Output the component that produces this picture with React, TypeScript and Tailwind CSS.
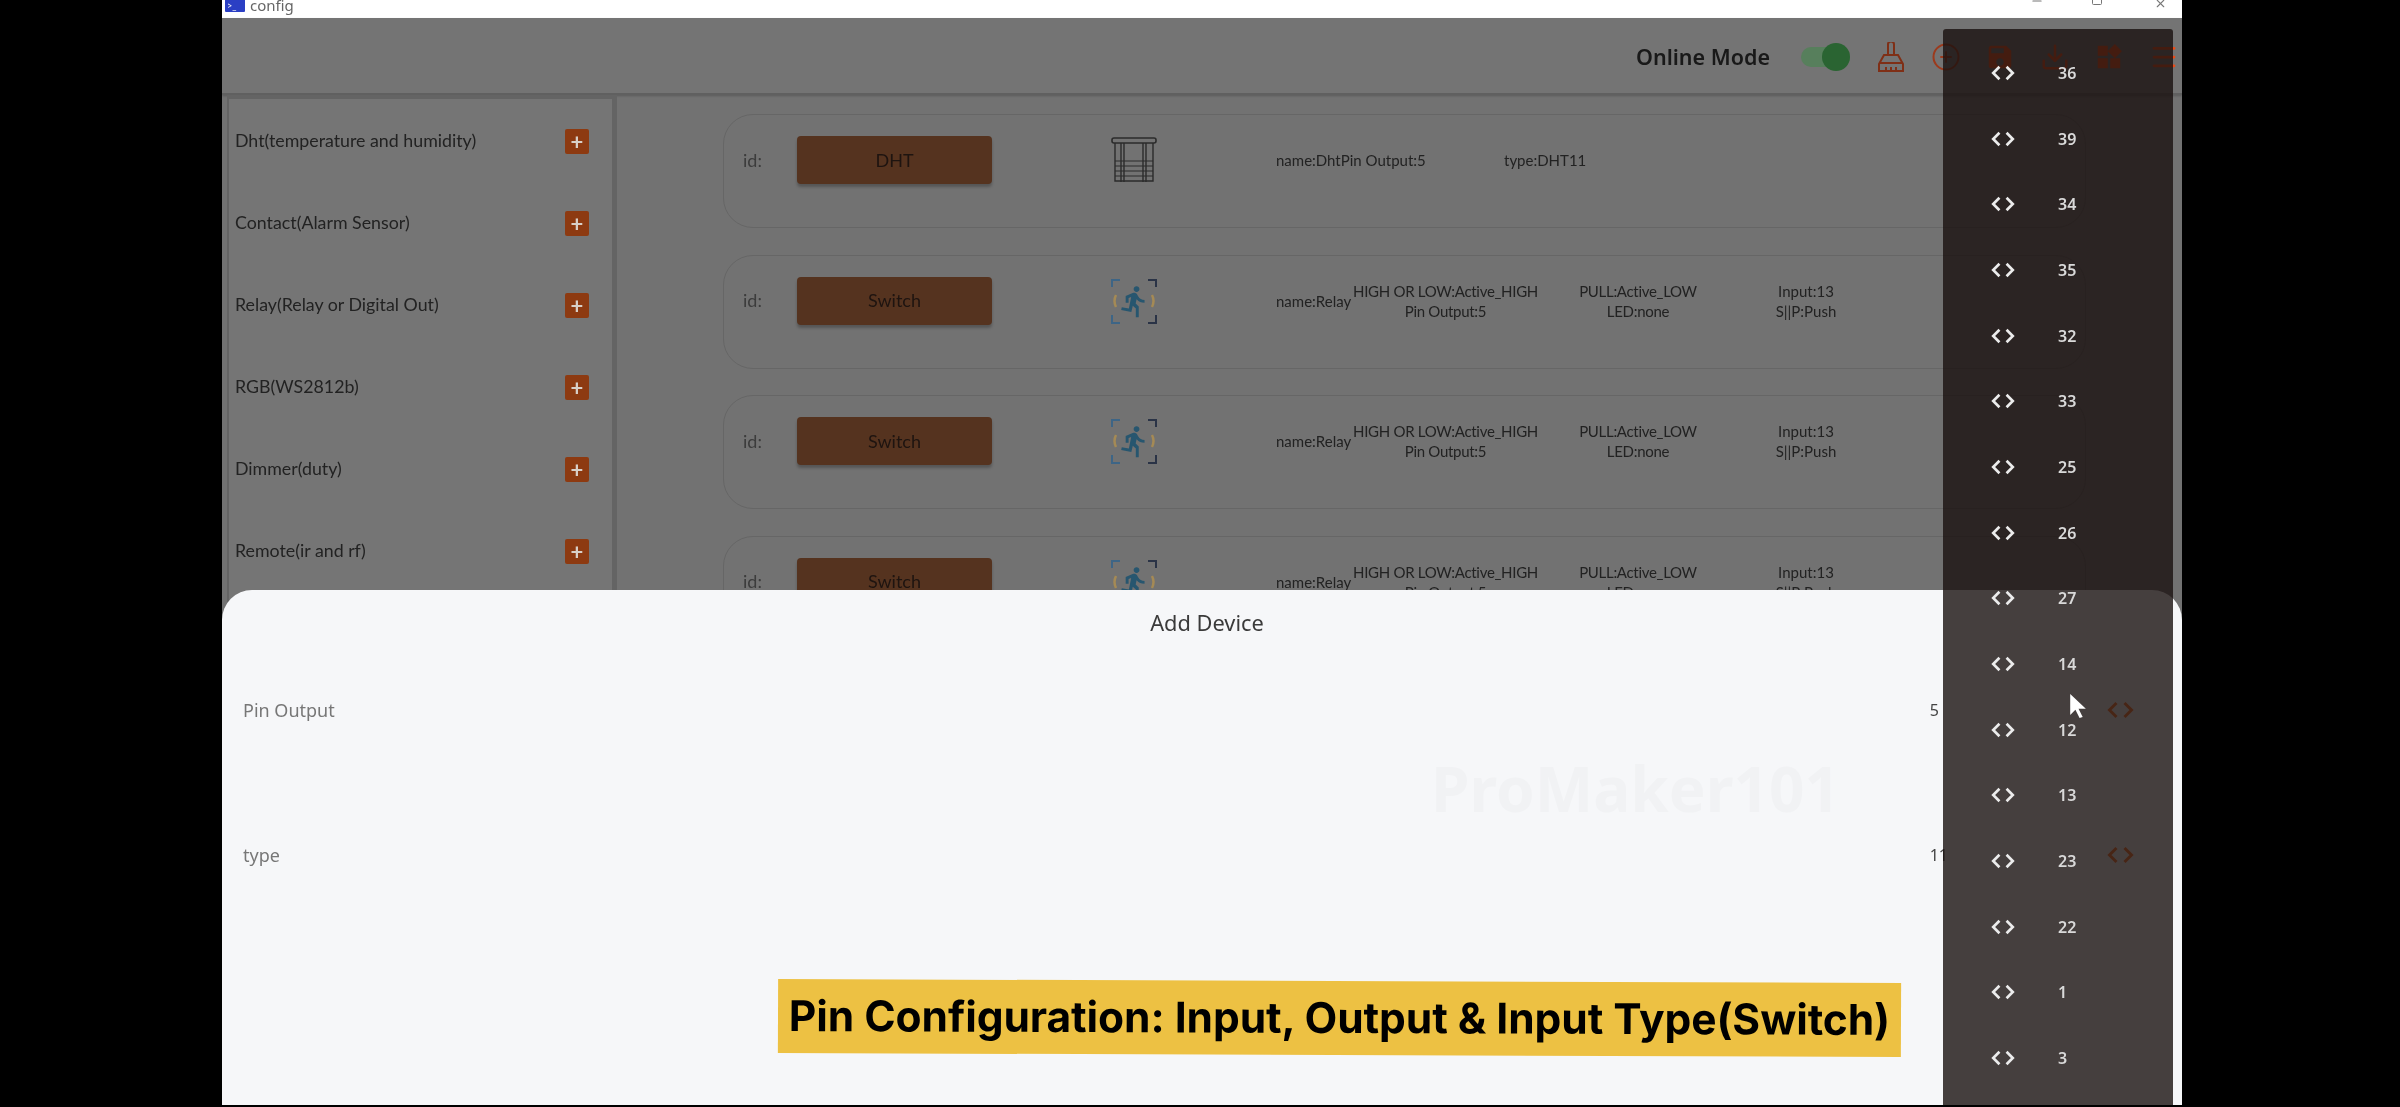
import { CirclePlus, Download, Menu, Minus, Square, X } from 'lucide-react'
import { MdSave, MdWidgets } from 'react-icons/md'

const sensors = [
  'Dht(temperature and humidity)',
  'Contact(Alarm Sensor)',
  'Relay(Relay or Digital Out)',
  'RGB(WS2812b)',
  'Dimmer(duty)',
  'Remote(ir and rf)',
]

const pins = ['36', '39', '34', '35', '32', '33', '25', '26', '27', '14', '12', '13', '23', '22', '1', '3']

function Chevrons({ className }: { className?: string }) {
  return (
    <svg viewBox="0 0 28 18" className={className} fill="none" stroke="currentColor" strokeWidth="3">
      <path d="M10 2 3 9l7 7" />
      <path d="M18 2l7 7-7 7" />
    </svg>
  )
}

function Broom() {
  return (
    <svg viewBox="0 0 26 30" className="h-[30px] w-[26px] text-[#7f2f16]" fill="none" stroke="currentColor" strokeWidth="2">
      <path d="M10 13V2.5a3 3 0 0 1 6 0V13" />
      <path d="M6 13h14l5 9v7H1v-7z" />
      <path d="M1.5 21h23M8 29v-4M13 29v-4M18 29v-4" />
    </svg>
  )
}

function BlindIcon() {
  return (
    <svg viewBox="0 0 46 46" className="h-[46px] w-[46px] text-[#2b2b2b]" fill="none" stroke="currentColor">
      <rect x="1" y="1" width="44" height="5" rx="2" strokeWidth="1.6" />
      <path d="M4 6v38h38V6" strokeWidth="1.4" />
      <path d="M4 24h38M4 29h38M4 34h38M4 39h38" strokeWidth="1" />
      <path d="M10 6v39M13 6v39M32 6v39M35 6v39" strokeWidth="1.4" />
    </svg>
  )
}

function RunnerIcon() {
  return (
    <svg viewBox="0 0 46 46" className="h-[46px] w-[46px]" fill="none">
      <path d="M1 9V2h8" stroke="#3d6586" strokeWidth="2" />
      <path d="M37 2h8v7" stroke="#2a3346" strokeWidth="2" />
      <path d="M1 37v8h8" stroke="#3d6586" strokeWidth="2" />
      <path d="M37 45h8v-8" stroke="#2a3346" strokeWidth="2" />
      <path d="M5 17q-3 6 0 12M41 17q3 6 0 12" stroke="#a58a55" strokeWidth="2.5" />
      <g transform="translate(6 6) scale(1.45)">
        <path
          fill="#27566f"
          d="M13.49 5.48c1.1 0 2-.9 2-2s-.9-2-2-2-2 .9-2 2 .9 2 2 2zm-3.6 13.9l1-4.4 2.1 2v6h2v-7.5l-2.1-2 .6-3c1.3 1.5 3.3 2.5 5.5 2.5v-2c-1.9 0-3.5-1-4.3-2.4l-1-1.6c-.4-.6-1-1-1.7-1-.3 0-.5.1-.8.1l-5.2 2.2v4.7h2v-3.4l1.8-.7-1.6 8.1-4.9-1-.4 2 7 1.4z"
        />
      </g>
    </svg>
  )
}

function DeviceCard({ label, kind }: { label: string; kind: 'dht' | 'switch' }) {
  return (
    <div className="h-[114px] w-[1363px] shrink-0 rounded-[30px] border border-[#666666] pt-[21px]">
      <div className="flex h-[48px] items-center">
        <span className="ml-[19px] w-[54px] text-[18px] text-[#3c3c3c]">id:</span>
        <div className="flex h-[48px] w-[195px] items-center justify-center rounded-[4px] bg-[#55331f] text-[18px] text-[#1e1410] shadow-[0_3px_3px_rgba(0,0,0,0.25)]">
          {label}
        </div>
        <div className="ml-[119px] w-[165px]">{kind === 'dht' ? <BlindIcon /> : <RunnerIcon />}</div>
        {kind === 'dht' ? (
          <div className="flex text-[15px] text-[#222222]">
            <span className="w-[228px]">name:DhtPin Output:5</span>
            <span>type:DHT11</span>
          </div>
        ) : (
          <div className="flex items-center text-[15px] leading-[20px] text-[#222222]">
            <span className="w-[76px] whitespace-nowrap">name:Relay</span>
            <span className="w-[187px] text-center tracking-[-0.3px] whitespace-nowrap">
              HIGH OR LOW:Active_HIGH
              <br />
              Pin Output:5
            </span>
            <span className="ml-[40px] w-[118px] text-center tracking-[-0.3px] whitespace-nowrap">
              PULL:Active_LOW
              <br />
              LED:none
            </span>
            <span className="ml-[50px] w-[118px] text-center">
              Input:13
              <br />
              S||P:Push
            </span>
          </div>
        )}
      </div>
    </div>
  )
}

export default function App() {
  return (
    <div className="flex h-[1107px] w-[2400px] overflow-hidden bg-black pl-[222px] font-['Lato',sans-serif]">
      <div className="relative h-[1105px] w-[1960px] overflow-hidden bg-[#727272] blur-[0.4px]">
        <div className="flex h-[18px] items-start justify-between overflow-hidden bg-white pl-[3px]">
          <div className="flex items-start gap-[5px]">
            <div className="flex h-[12px] w-[20px] items-end rounded-b-[1px] bg-[#2b3fc4] px-[2px] pb-[1px] text-[9px] leading-[10px] text-white">
              &gt;_
            </div>
            <span className="-mt-[5px] font-['Noto_Sans',sans-serif] text-[15px] leading-[20px] text-[#666666]">config</span>
          </div>
          <div className="flex items-start text-[#777777]">
            <Minus className="-mt-[6px] mr-[47px] h-[14px] w-[14px]" />
            <Square className="-mt-[6px] mr-[51px] h-[12px] w-[12px]" />
            <X className="-mt-[3px] mr-[15px] h-[13px] w-[13px]" />
          </div>
        </div>

        <header className="flex h-[77px] items-center border-b-2 border-[#606060] bg-[#747474] pt-[2px] shadow-[0_1px_2px_rgba(0,0,0,0.2)]">
          <span className="ml-[1414px] w-[132px] shrink-0 font-['Noto_Sans',sans-serif] text-[21.5px] leading-none font-semibold whitespace-nowrap text-[#191919]">
            Online Mode
          </span>
          <div className="relative ml-[33px] h-[20px] w-[49px] shrink-0 rounded-full bg-[#577f5c]">
            <div className="absolute -top-[4px] right-0 h-[28px] w-[28px] rounded-full bg-[#2a6432]" />
          </div>
          <div className="ml-[26px] flex shrink-0 items-center gap-[24.5px]">
            <span className="flex w-[30px] justify-center">
              <Broom />
            </span>
            <CirclePlus strokeWidth={1.6} className="h-[30px] w-[30px] text-[#9c3a1c]" />
            <MdSave className="h-[30px] w-[30px] text-[#f04a14]" />
            <Download strokeWidth={2} className="h-[30px] w-[30px] text-[#f04a14]" />
            <MdWidgets className="h-[30px] w-[30px] text-[#f04a14]" />
            <Menu strokeWidth={2.2} className="h-[30px] w-[30px] text-[#f04a14]" />
          </div>
        </header>

        <div className="flex">
          <aside className="ml-[5px] w-[390px] shrink-0 border-t-4 border-r-[5px] border-l-[2px] border-[#646464] bg-[#757575] pl-[6px]">
            {sensors.map((name) => (
              <div key={name} className="flex h-[82px] items-center text-[17.8px] text-[#222222]">
                <span className="w-[330px]">{name}</span>
                <span className="mt-[3px] flex h-[25px] w-[24px] items-center justify-center rounded-[2px] bg-[#8d3a11] text-[22px] leading-none font-bold text-[#d8d0c8]">
                  +
                </span>
              </div>
            ))}
          </aside>
          <main className="flex flex-col gap-[26.5px] pt-[19px] pl-[106px]">
            <DeviceCard label="DHT" kind="dht" />
            <DeviceCard label="Switch" kind="switch" />
            <DeviceCard label="Switch" kind="switch" />
            <DeviceCard label="Switch" kind="switch" />
          </main>
        </div>

        <section className="absolute inset-x-0 top-[590px] bottom-0 rounded-t-[30px] bg-[#f6f7f9] font-['Noto_Sans',sans-serif]">
          <h2 className="pt-[19px] pl-[10px] text-center text-[21.8px] leading-[28px] text-[#3a3a3a]">Add Device</h2>
          <div className="mt-[57px] flex h-[32px] items-center pr-[44px] pl-[21px] text-[18px] text-[#777777]">
            <span className="flex-1">Pin Output</span>
            <span className="mr-[164px] text-[16px] text-[#444444]">5</span>
            <Chevrons className="h-[18px] w-[35px] text-[#ff7a30]" />
          </div>
          <div className="mt-[113px] flex h-[32px] items-center pr-[44px] pl-[21px] text-[18px] text-[#777777]">
            <span className="flex-1">type</span>
            <span className="mr-[155px] text-[16px] text-[#444444]">11</span>
            <Chevrons className="h-[18px] w-[35px] text-[#ff7a30]" />
          </div>
          <div className="absolute top-[161px] left-[1209px] text-[62px] leading-[74px] font-bold text-[#f1f2f4]">ProMaker101</div>
          <div className="absolute top-[391px] left-[556px] flex h-[74px] w-[1123px] rotate-[0.2deg] items-center justify-center bg-[#edc143] font-['Inter',sans-serif] text-[42.4px] font-bold whitespace-nowrap text-black">
            Pin Configuration: Input, Output &amp; Input Type(Switch)
          </div>
        </section>

        <div className="absolute top-[29px] bottom-0 left-[1721px] w-[230px] rounded-t-[3px] bg-[#19100f]/80 pt-[36px] font-['Noto_Sans',sans-serif]">
          {pins.map((pin) => (
            <div key={pin} className="flex h-[65.67px] items-start">
              <Chevrons className="ml-[46px] h-[16px] w-[28px] text-[#ececec]" />
              <span className="ml-[41px] -mt-[2px] text-[16px] leading-[20px] font-semibold text-[#d9d9d9]">{pin}</span>
            </div>
          ))}
          <svg viewBox="0 0 16 24" className="absolute top-[664px] left-[126px] h-[25px] w-[17px] text-white">
            <path d="M1 1v20l5-5 4 8 3-1-4-8h7z" fill="currentColor" />
          </svg>
        </div>
      </div>
    </div>
  )
}
